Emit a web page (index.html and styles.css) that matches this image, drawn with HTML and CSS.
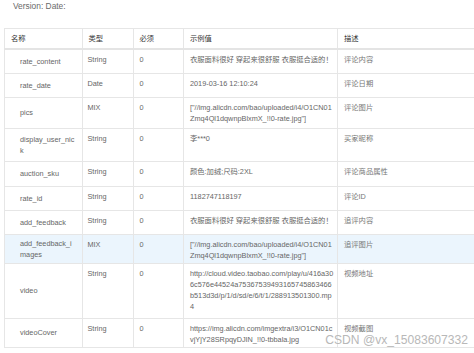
FILE: index.html
```html
<!DOCTYPE html>
<html lang="zh">
<head>
<meta charset="utf-8">
<link rel="stylesheet" href="styles.css">
</head>
<body>
<div class="page">
  <div class="version">Version: Date:</div>
  <table class="api">
    <colgroup>
      <col class="c-name"><col class="c-type"><col class="c-req"><col class="c-ex"><col class="c-desc">
    </colgroup>
    <thead>
      <tr><th>名称</th><th>类型</th><th>必须</th><th>示例值</th><th>描述</th></tr>
    </thead>
    <tbody>
      <tr class="r24"><td>rate_content</td><td>String</td><td>0</td><td>衣服面料很好 穿起来很舒服 衣服挺合适的！</td><td>评论内容</td></tr>
      <tr class="r24"><td>rate_date</td><td>Date</td><td>0</td><td>2019-03-16 12:10:24</td><td>评论日期</td></tr>
      <tr class="r31"><td>pics</td><td>MIX</td><td>0</td><td>["//img.alicdn.com/bao/uploaded/i4/O1CN01<br>Zmq4Ql1dqwnpBlxmX_!!0-rate.jpg"]</td><td>评论图片</td></tr>
      <tr class="r33"><td>display_user_nic<br>k</td><td>String</td><td>0</td><td>李***0</td><td>买家昵称</td></tr>
      <tr class="r25"><td>auction_sku</td><td>String</td><td>0</td><td>颜色:加绒;尺码:2XL</td><td>评论商品属性</td></tr>
      <tr class="r24"><td>rate_id</td><td>String</td><td>0</td><td>1182747118197</td><td>评论ID</td></tr>
      <tr class="r24"><td>add_feedback</td><td>String</td><td>0</td><td>衣服面料很好 穿起来很舒服 衣服挺合适的！</td><td>追评内容</td></tr>
      <tr class="r29 hl"><td>add_feedback_i<br>mages</td><td>MIX</td><td>0</td><td>["//img.alicdn.com/bao/uploaded/i4/O1CN01<br>Zmq4Ql1dqwnpBlxmX_!!0-rate.jpg"]</td><td>追评图片</td></tr>
      <tr class="r55"><td>video</td><td>String</td><td>0</td><td>http://cloud.video.taobao.com/play/u/416a30<br>6c576e44524a75367539493165745863466<br>b513d3d/p/1/d/sd/e/6/t/1/288913501300.mp<br>4</td><td>视频地址</td></tr>
      <tr class="r29"><td>videoCover</td><td>String</td><td>0</td><td>https://img.alicdn.com/imgextra/i3/O1CN01c<br>vjYjY28SRpqyDJIN_!!0-tbbala.jpg</td><td>视频截图</td></tr>
    </tbody>
  </table>
  <div class="watermark">CSDN @vx_15083607332</div>
</div>
</body>
</html>
```
FILE: styles.css
```css
html, body {
  margin: 0;
  padding: 0;
  background: #ffffff;
  overflow: hidden;
}
body {
  font-family: "Liberation Sans", "Noto Sans CJK SC", sans-serif;
  color: #666666;
}
.page {
  position: relative;
  width: 474px;
  height: 353px;
  padding: 0 0 0 4px;
  box-sizing: border-box;
}
.version {
  font-size: 8.4px;
  line-height: 12px;
  padding: 0 0 0 9px;
  color: #6a6a6a;
  height: 28px;
}
.api {
  border-collapse: collapse;
  table-layout: fixed;
  width: 471px;
  font-size: 7.3px;
  line-height: 11px;
}
.c-name { width: 77.5px; }
.c-type { width: 51px; }
.c-req { width: 50.5px; }
.c-ex { width: 154px; }
.c-desc { width: 138px; }
.api th, .api td {
  border: 1px solid #e6e6e6;
  text-align: left;
  white-space: nowrap;
  overflow: hidden;
}
.api th:last-child, .api td:last-child {
  border-right: none;
}
.api th {
  font-weight: normal;
  color: #333333;
  height: 19px;
  padding: 0 6px;
  vertical-align: middle;
  border-bottom: 2px solid #e4e4e4;
}
.api td {
  vertical-align: top;
  padding: 4px 6px 0 6px;
}
.api td:first-child {
  vertical-align: middle;
  padding: 0 4px 0 15px;
}
.api td:nth-child(2) {
  padding-left: 5px;
}
.api td:last-child {
  color: #777777;
}
.r24 { height: 24px; }
.r25 { height: 25px; }
.r29 { height: 29px; }
.r31 { height: 31px; }
.r33 { height: 33px; }
.r55 { height: 55px; }
.hl td {
  background: #ebf5fd;
}
.watermark {
  position: absolute;
  right: 6px;
  top: 332px;
  font-size: 12.1px;
  line-height: 16px;
  color: #b8b8b8;
  text-shadow: 0 0 1px #ffffff;
  white-space: nowrap;
}
```
